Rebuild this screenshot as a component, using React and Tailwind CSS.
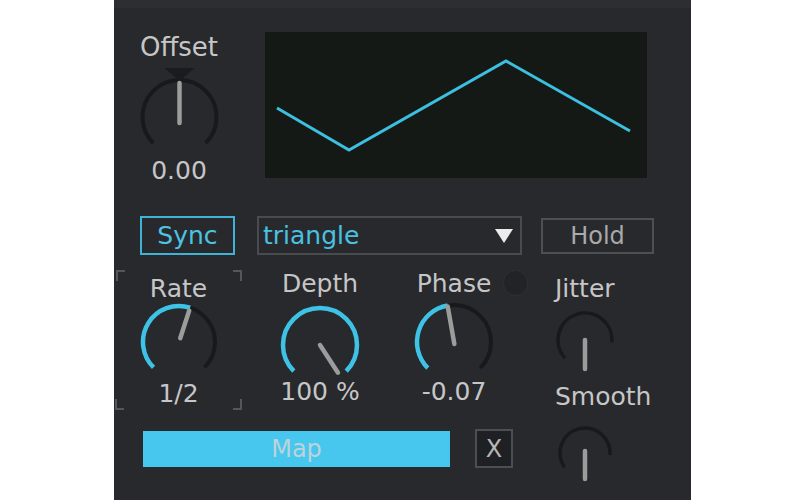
import React from "react";

const pt = (cx, cy, r, deg) => {
  const a = (deg * Math.PI) / 180;
  return [cx + r * Math.sin(a), cy - r * Math.cos(a)];
};

const arc = (cx, cy, r, a1, a2) => {
  const [x1, y1] = pt(cx, cy, r, a1);
  const [x2, y2] = pt(cx, cy, r, a2);
  const large = a2 - a1 > 180 ? 1 : 0;
  return `M${x1} ${y1} A${r} ${r} 0 ${large} 1 ${x2} ${y2}`;
};

// dial drawing: dark track, optional cyan value arc, grey needle
const Knob = ({ w, h, cx, cy, r, track = [-135, 135], fill, needle, nFrom = 0, nTo, sw = 4, pointer }) => {
  const [nx1, ny1] = pt(cx, cy, nFrom, needle);
  const [nx2, ny2] = pt(cx, cy, nTo ?? r - 3, needle);
  return (
    <svg width={w} height={h} viewBox={`0 0 ${w} ${h}`} className="block">
      <path d={arc(cx, cy, r, track[0], track[1])} fill="none" stroke="#18191c" strokeWidth={sw} />
      {fill && (
        <path d={arc(cx, cy, r, fill[0], fill[1])} fill="none" stroke="#3ec3e6" strokeWidth={sw + 0.5} />
      )}
      {pointer && (
        <polygon points={`${cx - 15},${cy - r - 12} ${cx + 15},${cy - r - 12} ${cx},${cy - r + 1}`} fill="#1a1b1e" />
      )}
      <line x1={nx1} y1={ny1} x2={nx2} y2={ny2} stroke="#9c9c9c" strokeWidth="4.5" strokeLinecap="round" />
    </svg>
  );
};

const Corner = ({ className }) => (
  <span className={`absolute w-[9px] h-[11px] border-[#55565a] ${className}`} />
);

export default function App() {
  return (
    <div
      className="w-[800px] h-[500px] bg-white flex overflow-hidden text-[#c6c6c6]"
      style={{ fontFamily: '"DejaVu Sans", Verdana, sans-serif' }}
    >
      <div className="w-[114px] shrink-0" />
      <div className="w-[577px] h-full shrink-0 bg-[#28292d] flex flex-col">
        <div className="h-[8px] bg-[#2d2e32]" />

        {/* top row: offset + wave display */}
        <div className="flex h-[152px] mt-[24px]">
          <div className="ml-[24px] w-[82px] flex flex-col items-center pt-[2px]">
            <span className="text-[26px] leading-[26px]">Offset</span>
            <Knob w={82} h={98} cx={41.5} cy={57} r={37} needle={0} nFrom={-6} nTo={34} pointer />
            <span className="text-[25px] leading-[26px]">0.00</span>
          </div>
          <div className="ml-[45px] w-[382px] h-[146px] bg-[#151916]">
            <svg width="382" height="146" viewBox="0 0 382 146" className="block">
              <polyline
                points="12,76 84,118 241,29 365,99"
                fill="none"
                stroke="#3dbfe0"
                strokeWidth="3"
                strokeLinejoin="miter"
              />
            </svg>
          </div>
        </div>

        {/* controls row */}
        <div className="flex items-center mt-[32px] h-[39px]">
          <div className="ml-[26px] w-[95px] h-[39px] border-2 border-[#3fb3d6] flex items-center justify-center text-[25px] leading-none text-[#4cc3e2]">
            Sync
          </div>
          <div className="ml-[22px] w-[265px] h-[39px] border-2 border-[#4a4b4f] flex items-center justify-between pl-[4px] pr-[7px]">
            <span className="text-[25px] leading-none text-[#4ac1e0]">triangle</span>
            <svg width="18" height="14" viewBox="0 0 18 14">
              <polygon points="0,0 18,0 9,14" fill="#ececec" />
            </svg>
          </div>
          <div className="ml-[19px] w-[113px] h-[36px] border-2 border-[#4e4f53] flex items-center justify-center text-[24px] leading-none text-[#a9a9a9]">
            Hold
          </div>
        </div>

        {/* knobs */}
        <div className="flex items-start mt-[15px]">
          <div className="ml-[1px] flex flex-col">
            <div className="flex items-start">
              <div className="relative w-[127px] h-[140px] flex flex-col items-center pt-[6px]">
                <Corner className="left-[1px] top-0 border-l-2 border-t-2" />
                <Corner className="right-0 top-0 border-r-2 border-t-2" />
                <Corner className="left-0 bottom-0 border-l-2 border-b-2" />
                <Corner className="right-0 bottom-0 border-r-2 border-b-2" />
                <span className="text-[25px] leading-[26px]">Rate</span>
                <Knob w={80} h={79} cx={40} cy={40} r={36} fill={[-135, 18]} needle={18} nFrom={4} nTo={33} />
                <span className="text-[25px] leading-[26px]">1/2</span>
              </div>
              <div className="ml-[33px] w-[90px] flex flex-col items-center pt-[1px]">
                <span className="text-[25px] leading-[26px]">Depth</span>
                <Knob w={90} h={82} cx={45} cy={48} r={37} fill={[-135, 135]} needle={147} nFrom={0} nTo={33} />
                <span className="text-[25px] leading-[26px]">100 %</span>
              </div>
              <div className="ml-[44px] w-[90px] flex flex-col items-center pt-[1px]">
                <span className="text-[25px] leading-[26px]">Phase</span>
                <Knob w={90} h={82} cx={45} cy={45} r={37} fill={[-135, -10]} needle={-10} nFrom={-2} nTo={36} />
                <span className="text-[25px] leading-[26px]">-0.07</span>
              </div>
              <div className="ml-[4px] w-[25px] h-[26px] rounded-full bg-[#222326] border border-[#2f3034]" />
            </div>

            <div className="flex items-center mt-[19px] ml-[28px]">
              <div className="w-[307px] h-[36px] bg-[#47c6ee] flex items-center justify-center text-[24px] leading-none text-[#bcd3db]">
                Map
              </div>
              <div className="ml-[25px] w-[38px] h-[39px] bg-[#1f2023] border-2 border-[#4d4e52] flex items-center justify-center text-[24px] leading-none text-[#b8b8b8]">
                X
              </div>
            </div>
          </div>

          <div className="ml-[27px] flex flex-col items-start pt-[6px]">
            <span className="text-[25px] leading-[26px]">Jitter</span>
            <Knob w={60} h={82} cx={30} cy={38} r={27} track={[-132, 95]} needle={180} nFrom={0} nTo={29} sw={3.5} />
            <span className="text-[25px] leading-[26px]">Smooth</span>
            <Knob w={60} h={80} cx={30} cy={43} r={25} track={[-125, 95]} needle={180} nFrom={-2} nTo={26} sw={3.5} />
          </div>
        </div>
      </div>
      <div className="flex-1" />
    </div>
  );
}
